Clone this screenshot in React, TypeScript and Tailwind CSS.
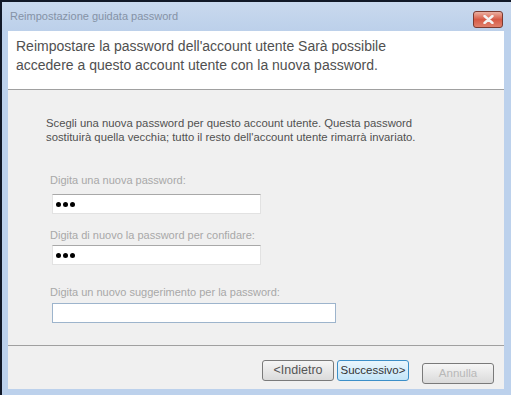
import React from 'react';

const font = { fontFamily: '"Liberation Sans", Arial, sans-serif' };

function PasswordField({ label, value, wide, gap }: { label: string; value?: string; wide?: boolean; gap: string }) {
  return (
    <div className="flex flex-col">
      <div className="h-[14px] pl-[42px] text-[11px] leading-[14px] text-[#a8a8a8]">{label}</div>
      <div
        className={
          'ml-[44px] h-[20px] bg-white border ' +
          gap +
          (wide ? ' w-[284px] border-[#9db4cc]' : ' w-[209px] border-[#e2e2e2] border-t-[#a8a8a8]')
        }
      >
        {value && (
          <div className="flex h-full items-center gap-[2px] pl-[3px]">
            {value.split('').map((_, i) => (
              <span key={i} className="h-[5px] w-[5px] rounded-full bg-black" />
            ))}
          </div>
        )}
      </div>
    </div>
  );
}

function WizardButton({ children, focused, disabled }: { children: React.ReactNode; focused?: boolean; disabled?: boolean }) {
  return (
    <button
      className={
        'h-[21px] w-[72px] rounded-[3px] border leading-none ' +
        (focused
          ? 'border-[#3c8fc8] bg-gradient-to-b from-[#eaf6fd] to-[#c4e5f8] text-[11.5px] text-[#333]'
          : 'border-[#7a7a7a] bg-gradient-to-b from-[#f6f6f6] to-[#dadada] ' +
            (disabled ? 'text-[11.5px] text-[#b8b8b8]' : 'text-[12.5px] text-[#555]'))
      }
    >
      {children}
    </button>
  );
}

export default function App() {
  return (
    <div className="h-[395px] w-[511px] overflow-hidden bg-[#111827] pl-[2px] pt-[2px]" style={font}>
      <div className="flex h-full w-full flex-col bg-[#bcd1ec]">
        {/* title bar */}
        <div className="relative flex h-[29px] items-center bg-gradient-to-b from-[#c9d9ee] to-[#bcd0ea] pl-[8px]">
          <span className="text-[11px] text-[#8592a6]">Reimpostazione guidata password</span>
          <div className="absolute right-[8px] top-[9px] flex h-[17px] w-[30px] items-center justify-center rounded-[3px] border border-[#7a3a30] bg-gradient-to-b from-[#eab0a2] via-[#d65a46] to-[#e0806c]">
            <svg width="11" height="9" viewBox="0 0 11 9">
              <path d="M1.5 1 L9.5 8 M9.5 1 L1.5 8" stroke="#f4f4f4" strokeWidth="2.4" strokeLinecap="round" />
            </svg>
          </div>
        </div>

        <div className="ml-[6px] mr-[7px] flex flex-1 flex-col">
          {/* header */}
          <div className="h-[58px] bg-white pl-[8px] pt-[6px] text-[14px] leading-[19px] text-[#505050]">
            <p>Reimpostare la password dell'account utente Sarà possibile</p>
            <p>accedere a questo account utente con la nuova password.</p>
          </div>
          <div className="h-px bg-[#a0a0a0]" />

          {/* body */}
          <div className="flex h-[255px] flex-col bg-[#f0f0f0] pt-[26px]">
            <div className="pl-[38px] text-[11.3px] leading-[14px] text-[#505050]">
              <p>Scegli una nuova password per questo account utente. Questa password</p>
              <p>sostituirà quella vecchia; tutto il resto dell'account utente rimarrà invariato.</p>
            </div>
            <div className="mt-[29px] flex flex-col">
              <PasswordField label="Digita una nuova password:" value="•••" gap="mt-[7px]" />
              <div className="mt-[14px]">
                <PasswordField label="Digita di nuovo la password per confidare:" value="•••" gap="mt-[3px]" />
              </div>
              <div className="mt-[20px]">
                <PasswordField label="Digita un nuovo suggerimento per la password:" wide gap="mt-[4px]" />
              </div>
            </div>
          </div>
          <div className="h-px bg-[#a0a0a0]" />

          {/* footer */}
          <div className="flex flex-1 items-start justify-end bg-[#f0f0f0] pr-[10px] pt-[14px]">
            <div className="flex gap-[3px]">
              <WizardButton>&lt;Indietro</WizardButton>
              <WizardButton focused>Successivo&gt;</WizardButton>
            </div>
            <div className="ml-[13px]">
              <WizardButton disabled>Annulla</WizardButton>
            </div>
          </div>
        </div>
        <div className="h-[6px]" />
      </div>
    </div>
  );
}
